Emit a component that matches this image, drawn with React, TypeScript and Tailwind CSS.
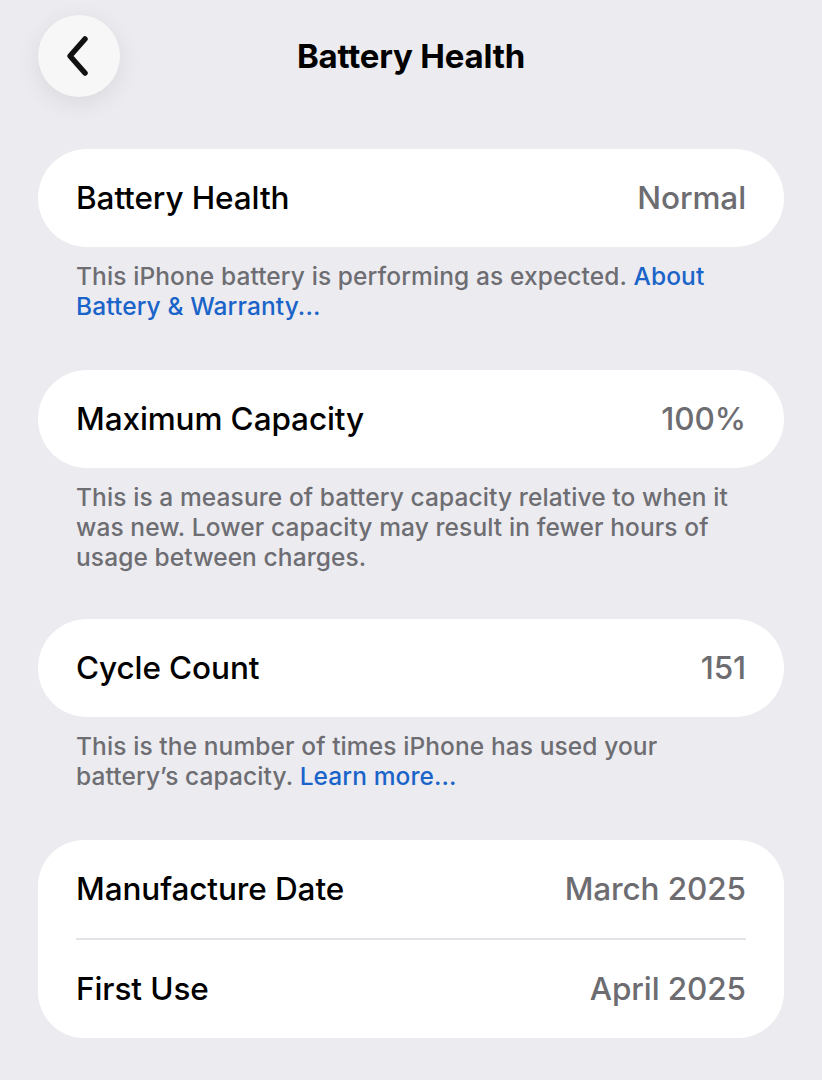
import React from 'react';

const font = { fontFamily: 'Inter, "Noto Sans", sans-serif' };

const Row: React.FC<{ label: string; value: string }> = ({ label, value }) => (
  <div className="flex h-[98px] items-center justify-between">
    <span className="text-[31.5px] font-medium text-black tracking-[-0.1px]">{label}</span>
    <span className="text-[31.5px] font-medium text-[#6c6c71] tracking-[-0.1px]">{value}</span>
  </div>
);

const Note: React.FC<{ children: React.ReactNode }> = ({ children }) => (
  <p className="pl-[76px] pr-[60px] pt-[14px] text-[24.5px] leading-[30px] font-medium text-[#6d6d72] tracking-[0.1px]">
    {children}
  </p>
);

const Link: React.FC<{ children: React.ReactNode }> = ({ children }) => (
  <a href="#" className="text-[#1a64c9]">{children}</a>
);

export default function App() {
  return (
    <div className="min-h-screen w-[822px] bg-[#ebebf0] overflow-hidden" style={font}>
      <header className="relative h-[111px]">
        <button className="absolute left-[38px] top-[15px] flex h-[82px] w-[82px] items-center justify-center rounded-full bg-[#f7f7f7] shadow-[0_6px_24px_rgba(0,0,0,0.08)]">
          <svg width="30" height="42" viewBox="0 0 30 42" fill="none" className="-ml-[6px]">
            <path d="M24 4 L9 21 L24 38" stroke="#111" strokeWidth="5.5" strokeLinecap="round" strokeLinejoin="round" />
          </svg>
        </button>
        <h1 className="pt-[36px] text-center text-[33px] font-bold leading-[40px] text-black tracking-[-0.2px]">
          Battery Health
        </h1>
      </header>

      <div className="pt-[38px]">
        <div className="mx-[38px] rounded-full bg-white px-[38px]">
          <Row label="Battery Health" value="Normal" />
        </div>
        <Note>
          This iPhone battery is performing as expected. <Link>About Battery &amp; Warranty...</Link>
        </Note>

        <div className="mx-[38px] mt-[49px] rounded-full bg-white px-[38px]">
          <Row label="Maximum Capacity" value="100%" />
        </div>
        <Note>
          This is a measure of battery capacity relative to when it was new. Lower capacity may result in fewer hours of usage between charges.
        </Note>

        <div className="mx-[38px] mt-[47px] rounded-full bg-white px-[38px]">
          <Row label="Cycle Count" value="151" />
        </div>
        <Note>
          This is the number of times iPhone has used your battery’s capacity. <Link>Learn more...</Link>
        </Note>

        <div className="mx-[38px] mt-[49px] rounded-[46px] bg-white px-[38px]">
          <Row label="Manufacture Date" value="March 2025" />
          <div className="h-[2px] bg-[#e4e4e8]" />
          <Row label="First Use" value="April 2025" />
        </div>
      </div>
    </div>
  );
}
